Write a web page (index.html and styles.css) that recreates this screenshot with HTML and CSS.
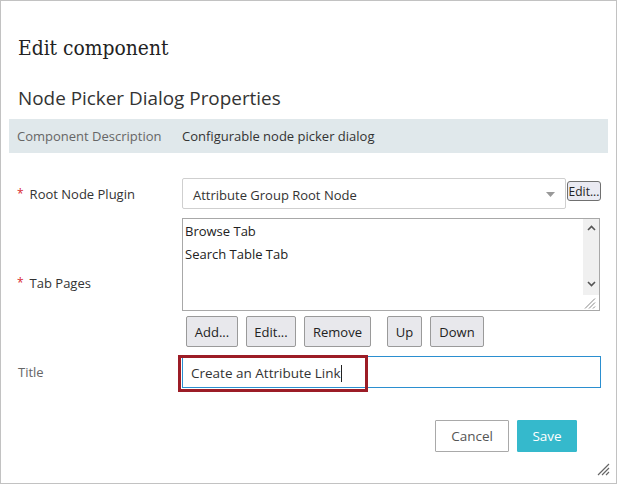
FILE: index.html
```html
<!DOCTYPE html>
<html>
<head>
<meta charset="utf-8">
<link rel="stylesheet" href="styles.css">
</head>
<body>
<div class="dialog">
  <h1 class="dlg-title">Edit component</h1>
  <h2 class="sec-title">Node Picker Dialog Properties</h2>
  <div class="band">
    <span class="band-label">Component Description</span>
    <span class="band-value">Configurable node picker dialog</span>
  </div>
  <div class="form">
    <div class="row row-root">
      <label class="lbl"><span class="req">*</span>Root Node Plugin</label>
      <div class="ctl ctl-root">
        <div class="select">
          <span>Attribute Group Root Node</span>
          <svg class="caret" width="9" height="5" viewBox="0 0 9 5"><path d="M0 0H9L4.5 5Z" fill="#999"/></svg>
        </div>
        <button class="mini-btn">Edit...</button>
      </div>
    </div>
    <div class="row row-tabs">
      <label class="lbl"><span class="req">*</span>Tab Pages</label>
      <div class="ctl">
        <div class="listbox">
          <div class="items">
            <div class="item">Browse Tab</div>
            <div class="item">Search Table Tab</div>
          </div>
          <div class="scroll">
            <div class="track">
              <svg width="9" height="6" viewBox="0 0 9 6"><path d="M1 5L4.5 1.5L8 5" fill="none" stroke="#555" stroke-width="1.6"/></svg>
              <svg width="9" height="6" viewBox="0 0 9 6"><path d="M1 1L4.5 4.5L8 1" fill="none" stroke="#555" stroke-width="1.6"/></svg>
            </div>
            <svg class="grip" width="13" height="13" viewBox="0 0 13 13"><path d="M12 2L2 12M12 6L6 12M12 10L10 12" stroke="#888" stroke-width="1"/></svg>
          </div>
        </div>
        <div class="btn-row">
          <button class="btn w-add">Add...</button>
          <button class="btn w-edit">Edit...</button>
          <button class="btn w-remove">Remove</button>
          <button class="btn w-up gap-l">Up</button>
          <button class="btn w-down">Down</button>
        </div>
      </div>
    </div>
    <div class="row row-title">
      <label class="lbl lbl-muted">Title</label>
      <div class="ctl">
        <div class="input">Create an Attribute Link<span class="cursor"></span></div>
      </div>
    </div>
  </div>
  <div class="footer">
    <button class="fbtn cancel">Cancel</button>
    <button class="fbtn save">Save</button>
  </div>
  <div class="highlight"></div>
  <svg class="dlg-grip" width="13" height="13" viewBox="0 0 13 13"><path d="M12 1L1 12M12 5L5 12M12 9L9 12" stroke="#666" stroke-width="1.2"/></svg>
</div>
</body>
</html>
```

FILE: styles.css
```css
* { box-sizing: border-box; }
html, body { margin: 0; padding: 0; background: #fff; }
body { font-family: "Open Sans", "Noto Sans", sans-serif; font-size: 13px; color: #333; }

.dialog {
  position: relative;
  width: 617px;
  height: 484px;
  border: 1px solid #c2c2c2;
  background: #fff;
}

.dlg-title {
  margin: 0;
  padding: 33px 0 0 17px;
  height: 64px;
  font-family: "DejaVu Serif Condensed", "DejaVu Serif", serif;
  font-stretch: condensed;
  font-weight: normal;
  font-size: 20.8px;
  line-height: 28px;
  color: #222;
}

.sec-title {
  margin: 0;
  padding: 20px 0 0 17px;
  height: 54px;
  font-weight: normal;
  font-size: 18.9px;
  line-height: 26px;
  color: #333;
}

.band {
  margin: 0 8px;
  height: 34px;
  background: #e0e8eb;
  display: flex;
  align-items: center;
  padding-left: 8px;
}
.band-label { width: 165px; color: #666; }
.band-value { color: #333; }

.form { padding: 25px 0 0 16px; }
.row { display: grid; grid-template-columns: 165px 1fr; align-items: center; }
.row-tabs { margin-top: 9px; }
.row-title { margin-top: 9px; }

.lbl { color: #333; }
.lbl-muted { color: #666; padding-left: 1px; }
.req { color: #d8282e; margin-right: 6px; font-size: 12px; position: relative; top: -1px; }

.ctl-root { display: flex; align-items: center; gap: 1px; }
.select {
  width: 384px;
  height: 31px;
  border: 1px solid #cfcfcf;
  border-radius: 2px;
  display: flex;
  align-items: center;
  justify-content: space-between;
  padding: 2px 10px 0 10px;
  color: #333;
}
.caret { margin-top: -1px; }
.mini-btn {
  width: 34px;
  height: 20px;
  padding: 0;
  margin-top: -5px;
  border: 1px solid #707070;
  border-radius: 3px;
  background: #eaeaf2;
  font-family: "Open Sans", sans-serif;
  font-size: 12px;
  color: #222;
}

.listbox {
  width: 418px;
  height: 93px;
  border: 1px solid #a8a8a8;
  display: flex;
}
.items { flex: 1; padding: 1px 0 0 2px; color: #222; }
.item { height: 23px; line-height: 22px; }
.scroll { width: 16px; display: flex; flex-direction: column; }
.track {
  flex: 1;
  background: #f0f0f0;
  display: flex;
  flex-direction: column;
  align-items: center;
  justify-content: space-between;
  padding: 6px 0 8px;
}
.grip { display: block; height: 15px; padding-top: 1px; }

.btn-row { display: flex; gap: 8px; margin-top: 5px; padding-left: 4px; }
.btn {
  height: 31px;
  padding: 0;
  border: 1px solid #9a9a9a;
  border-radius: 2px;
  background: #e8e8ec;
  font-family: "Open Sans", sans-serif;
  font-size: 13px;
  color: #222;
}
.w-add { width: 52px; }
.w-edit { width: 50px; }
.w-remove { width: 67px; }
.w-up { width: 35px; }
.w-down { width: 54px; }
.gap-l { margin-left: 8px; }

.input {
  width: 419px;
  height: 32px;
  border: 1px solid #2b8fd0;
  padding: 2px 0 0 8px;
  display: flex;
  align-items: center;
  font-size: 13.5px;
  color: #333;
}
.cursor { display: inline-block; width: 1px; height: 17px; background: #222; margin-left: 0; }

.footer { display: flex; justify-content: flex-end; gap: 8px; padding: 32px 39px 0 0; }
.fbtn {
  height: 32px;
  padding: 0;
  font-family: "Open Sans", sans-serif;
  font-size: 13.5px;
  border-radius: 1px;
}
.cancel { width: 74px; border: 1px solid #a9a9a9; background: #fff; color: #555; }
.save { width: 60px; border: 1px solid #35b9cc; background: #35b9cc; color: #fff; }

.highlight {
  position: absolute;
  left: 177px;
  top: 354px;
  width: 190px;
  height: 37px;
  border: 3px solid #9c1c26;
}
.dlg-grip { position: absolute; left: 596px; top: 462px; }
```
